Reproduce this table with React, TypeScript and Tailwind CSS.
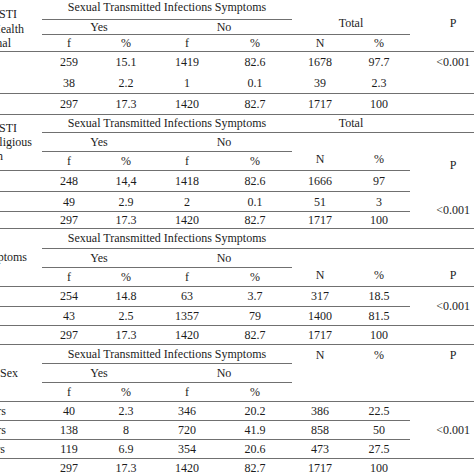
const line = 'border-b border-[#707070]';
const cell = 'p-0 text-center align-middle whitespace-nowrap';

// label lines are cut off at the left edge of the crop, so they sit right-aligned in a narrow cell
const Label = ({ lines, lead = 'leading-[14px]' }: { lines: { text: string; cls: string }[]; lead?: string }) => (
  <div className={`flex flex-col ${lead}`}>
    {lines.map((l, i) => (
      <div key={i} className={`flex justify-end whitespace-nowrap ${l.cls}`}>
        <span>{l.text}</span>
      </div>
    ))}
  </div>
);

const Cols = () => (
  <colgroup>
    <col className="w-[42px]" />
    <col className="w-[54px]" />
    <col className="w-[60px]" />
    <col className="w-[62px]" />
    <col className="w-[74px]" />
    <col className="w-[56px]" />
    <col className="w-[62px]" />
    <col className="w-[86px]" />
  </colgroup>
);

const Title = ({ extra = '' }: { extra?: string }) => (
  <td colSpan={4} className={`${cell} ${line} ${extra}`}>Sexual Transmitted Infections Symptoms</td>
);

const Nums = ({ values, border = true }: { values: string[]; border?: boolean }) => (
  <>
    {values.map((v, i) => (
      <td key={i} className={`${cell} ${border ? line : ''}`}>{v}</td>
    ))}
  </>
);

const tableCls = 'w-[496px] table-fixed border-collapse';

const SectionOne = () => (
  <table className={tableCls}>
    <Cols />
    <tbody>
      <tr className="h-[19px]">
        <td rowSpan={3} className={`p-0 align-top pt-[7px] overflow-hidden ${line}`}>
          <Label
            lead="leading-[14.5px]"
            lines={[
              { text: 'Source of STI', cls: 'pr-[25px]' },
              { text: 'Health', cls: 'pr-[18px]' },
              { text: 'Personal', cls: 'pr-[31px]' },
            ]}
          />
        </td>
        <Title extra="align-top" />
        <td colSpan={2} rowSpan={2} className={`${cell} ${line} align-top pt-[16px]`}>Total</td>
        <td rowSpan={3} className={`${cell} ${line} align-top pt-[16px]`}>P</td>
      </tr>
      <tr className="h-[14px]">
        <td colSpan={2} className={`${cell} ${line}`}>Yes</td>
        <td colSpan={2} className={`${cell} ${line}`}>No</td>
      </tr>
      <tr className="h-[17px]">
        <Nums values={['f', '%', 'f', '%', 'N', '%']} />
      </tr>
      <tr className="h-[22px]">
        <td className="p-0" />
        <Nums values={['259', '15.1', '1419', '82.6', '1678', '97.7', '<0.001']} border={false} />
      </tr>
      <tr className="h-[20px]">
        <td className={`p-0 ${line}`} />
        <Nums values={['38', '2.2', '1', '0.1', '39', '2.3', '']} />
      </tr>
      <tr className="h-[21px]">
        <td className={`p-0 ${line}`} />
        <Nums values={['297', '17.3', '1420', '82.7', '1717', '100', '']} />
      </tr>
    </tbody>
  </table>
);

const SectionTwo = () => (
  <table className={tableCls}>
    <Cols />
    <tbody>
      <tr className="h-[18px]">
        <td rowSpan={3} className={`p-0 overflow-hidden ${line}`}>
          <Label
            lines={[
              { text: 'Source of STI', cls: 'pr-[25px]' },
              { text: 'Religious', cls: 'pr-[10px]' },
              { text: 'Person', cls: 'pr-[39px]' },
            ]}
          />
        </td>
        <Title />
        <td colSpan={2} className={`${cell} ${line}`}>Total</td>
        <td className={`p-0 ${line}`} />
      </tr>
      <tr className="h-[19px]">
        <td colSpan={2} className={`${cell} ${line}`}>Yes</td>
        <td colSpan={2} className={`${cell} ${line}`}>No</td>
        <td rowSpan={2} className={`${cell} ${line} align-top pt-[19px]`}>N</td>
        <td rowSpan={2} className={`${cell} ${line} align-top pt-[19px]`}>%</td>
        <td rowSpan={3} className={`${cell} align-top pt-[25px]`}>P</td>
      </tr>
      <tr className="h-[19px]">
        <Nums values={['f', '%', 'f', '%']} />
      </tr>
      <tr className="h-[21px]">
        <td className={`p-0 ${line}`} />
        <Nums values={['248', '14,4', '1418', '82.6', '1666', '97']} />
      </tr>
      <tr className="h-[20px]">
        <td className={`p-0 ${line}`} />
        <Nums values={['49', '2.9', '2', '0.1', '51', '3']} />
        <td rowSpan={2} className={`${cell} ${line}`}>&lt;0.001</td>
      </tr>
      <tr className="h-[17px]">
        <td className={`p-0 ${line}`} />
        <Nums values={['297', '17.3', '1420', '82.7', '1717', '100']} />
      </tr>
    </tbody>
  </table>
);

const SectionThree = () => (
  <table className={tableCls}>
    <Cols />
    <tbody>
      <tr className="h-[19px]">
        <td rowSpan={3} className={`p-0 overflow-hidden ${line}`}>
          <Label lines={[{ text: 'STI Symptoms', cls: 'pr-[15px]' }]} />
        </td>
        <Title />
        <td colSpan={3} className={`p-0 ${line}`} />
      </tr>
      <tr className="h-[19px]">
        <td colSpan={2} className={`${cell} ${line}`}>Yes</td>
        <td colSpan={2} className={`${cell} ${line}`}>No</td>
        <td rowSpan={2} className={`${cell} ${line} align-top pt-[19px]`}>N</td>
        <td rowSpan={2} className={`${cell} ${line} align-top pt-[19px]`}>%</td>
        <td rowSpan={2} className={`${cell} ${line} align-top pt-[19px]`}>P</td>
      </tr>
      <tr className="h-[19px]">
        <Nums values={['f', '%', 'f', '%']} />
      </tr>
      <tr className="h-[20px]">
        <td className={`p-0 ${line}`} />
        <Nums values={['254', '14.8', '63', '3.7', '317', '18.5']} />
        <td rowSpan={2} className={`${cell} ${line}`}>&lt;0.001</td>
      </tr>
      <tr className="h-[19px]">
        <td className={`p-0 ${line}`} />
        <Nums values={['43', '2.5', '1357', '79', '1400', '81.5']} />
      </tr>
      <tr className="h-[19px]">
        <td className={`p-0 ${line}`} />
        <Nums values={['297', '17.3', '1420', '82.7', '1717', '100', '']} />
      </tr>
    </tbody>
  </table>
);

const ageRows = [
  { label: '< 15 years', cls: 'pr-[36px]', values: ['40', '2.3', '346', '20.2', '386', '22.5'] },
  { label: '15-18 years', cls: 'pr-[36px]', values: ['138', '8', '720', '41.9', '858', '50'] },
  { label: '> 18 years', cls: 'pr-[37px]', values: ['119', '6.9', '354', '20.6', '473', '27.5'] },
];

const SectionFour = () => (
  <table className={tableCls}>
    <Cols />
    <tbody>
      <tr className="h-[19px]">
        <td rowSpan={3} className={`p-0 overflow-hidden ${line}`}>
          <Label lines={[{ text: 'Age at First Sex', cls: 'pr-[24px]' }]} />
        </td>
        <Title />
        <td rowSpan={3} className={`${cell} ${line} align-top pt-[3px]`}>N</td>
        <td rowSpan={3} className={`${cell} ${line} align-top pt-[3px]`}>%</td>
        <td rowSpan={3} className={`${cell} ${line} align-top pt-[3px]`}>P</td>
      </tr>
      <tr className="h-[19px]">
        <td colSpan={2} className={`${cell} ${line}`}>Yes</td>
        <td colSpan={2} className={`${cell} ${line}`}>No</td>
      </tr>
      <tr className="h-[19px]">
        <Nums values={['f', '%', 'f', '%']} />
      </tr>
      {ageRows.map((r, i) => (
        <tr key={r.label} className="h-[19px]">
          <td className={`p-0 overflow-hidden ${line}`}>
            <Label lines={[{ text: r.label, cls: r.cls }]} />
          </td>
          <Nums values={r.values} />
          {i === 0 && <td rowSpan={3} className={`${cell} ${line}`}>&lt;0.001</td>}
        </tr>
      ))}
      <tr className="h-[19px]">
        <td className={`p-0 ${line}`} />
        <Nums values={['297', '17.3', '1420', '82.7', '1717', '100', '']} />
      </tr>
    </tbody>
  </table>
);

export default function App() {
  return (
    <div className="w-[474px] h-[474px] overflow-hidden bg-white text-[#1c1c1c] text-[12px] leading-[14px] font-['Liberation_Serif',serif]">
      <SectionOne />
      <SectionTwo />
      <SectionThree />
      <SectionFour />
    </div>
  );
}
